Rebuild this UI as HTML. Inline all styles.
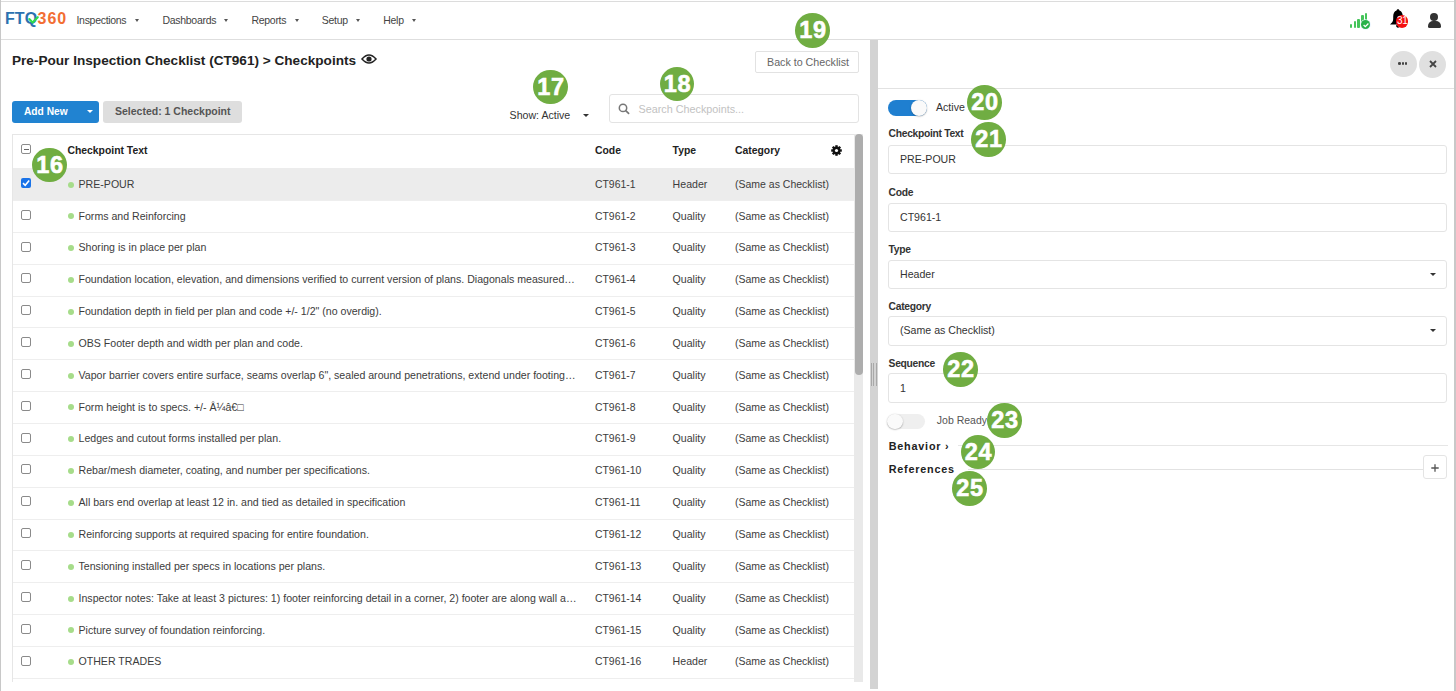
<!DOCTYPE html>
<html><head><meta charset="utf-8"><style>
html,body{margin:0;padding:0;background:#fff;width:1456px;height:691px;overflow:hidden;position:relative}
.t{position:absolute;white-space:nowrap;font-family:"Liberation Sans",sans-serif}
.b{position:absolute}
.caret{position:absolute;width:0;height:0;border-style:solid;border-color:transparent}
.num{position:absolute;border-radius:50%;background:#70ad42;color:#fff;font-family:"Liberation Sans",sans-serif;font-weight:bold;font-size:23.5px;text-align:center;letter-spacing:0.6px;text-indent:1px;-webkit-text-stroke:0.6px #fff}
</style></head><body>
<div class="b" style="left:0px;top:1px;width:1456px;height:1px;background:#dcdcdc"></div>
<div class="b" style="left:0px;top:0px;width:1px;height:691px;background:#c8c8c8"></div>
<div class="b" style="left:1454px;top:0px;width:2px;height:691px;background:#c8c8c8"></div>
<div class="b" style="left:1px;top:39px;width:1453px;height:1px;background:#dedede"></div>
<div class="t" style="left:5px;top:10.6px;font-size:16px;line-height:16px;font-weight:bold;color:#2c72b0;letter-spacing:0.1px">FTQ</div>
<div class="t" style="left:37.5px;top:10.6px;font-size:16px;line-height:16px;font-weight:bold;color:#f26e33;letter-spacing:1px">360</div>
<svg class="b" style="left:0;top:0" width="50" height="40" viewBox="0 0 50 40"><path d="M29.3 19 L32.6 22.4 L37.8 17.2" stroke="#2fdc4a" stroke-width="2.1" fill="none" stroke-linecap="round" stroke-linejoin="round"/></svg>
<div class="t" style="left:76.50px;top:15px;font-size:10.5px;line-height:10.5px;color:#444;font-weight:normal;letter-spacing:-0.3px">Inspections</div>
<div class="caret" style="left:135.3px;top:19px;border-width:3px 2.5px 0 2.5px;border-top-color:#555"></div>
<div class="t" style="left:162.50px;top:15px;font-size:10.5px;line-height:10.5px;color:#444;font-weight:normal;letter-spacing:-0.3px">Dashboards</div>
<div class="caret" style="left:224px;top:19px;border-width:3px 2.5px 0 2.5px;border-top-color:#555"></div>
<div class="t" style="left:251.50px;top:15px;font-size:10.5px;line-height:10.5px;color:#444;font-weight:normal;letter-spacing:-0.3px">Reports</div>
<div class="caret" style="left:294.8px;top:19px;border-width:3px 2.5px 0 2.5px;border-top-color:#555"></div>
<div class="t" style="left:321.80px;top:15px;font-size:10.5px;line-height:10.5px;color:#444;font-weight:normal;letter-spacing:-0.3px">Setup</div>
<div class="caret" style="left:356.2px;top:19px;border-width:3px 2.5px 0 2.5px;border-top-color:#555"></div>
<div class="t" style="left:383.30px;top:15px;font-size:10.5px;line-height:10.5px;color:#444;font-weight:normal;letter-spacing:-0.3px">Help</div>
<div class="caret" style="left:412px;top:19px;border-width:3px 2.5px 0 2.5px;border-top-color:#555"></div>
<div class="t" style="left:12.00px;top:54px;font-size:13.6px;line-height:13.6px;color:#222;font-weight:bold;">Pre-Pour Inspection Checklist (CT961) &gt; Checkpoints</div>
<svg class="b" style="left:361px;top:53px" width="16" height="12" viewBox="0 0 16 12"><path d="M1 6 Q8 -2 15 6 Q8 14 1 6 Z" stroke="#222" stroke-width="1.6" fill="none"/><circle cx="8" cy="6" r="2.6" fill="#222"/></svg>
<div class="b" style="left:754.5px;top:50.5px;width:104.5px;height:22px;border:1px solid #e2e2e2;border-radius:2px;box-sizing:border-box;background:#fff"></div>
<div class="t" style="left:767.00px;top:57px;font-size:10.7px;line-height:10.7px;color:#666;font-weight:normal;">Back to Checklist</div>
<div class="b" style="left:12px;top:100.5px;width:86.5px;height:22.5px;background:#2183d1;border-radius:3px"></div>
<div class="t" style="left:24.00px;top:107px;font-size:10.2px;line-height:10.2px;color:#fff;font-weight:bold;">Add New</div>
<div class="caret" style="left:87px;top:109.8px;border-width:3.5px 3px 0 3px;border-top-color:#fff"></div>
<div class="b" style="left:102.5px;top:100.5px;width:139.5px;height:22px;background:#dedede;border-radius:3px"></div>
<div class="t" style="left:115.00px;top:106px;font-size:10.5px;line-height:10.5px;color:#555;font-weight:bold;">Selected: 1 Checkpoint</div>
<div class="t" style="left:509.60px;top:110px;font-size:10.6px;line-height:10.6px;color:#333;font-weight:normal;">Show: Active</div>
<div class="caret" style="left:582.5px;top:113.5px;border-width:3.5px 3px 0 3px;border-top-color:#333"></div>
<div class="b" style="left:609px;top:94px;width:250px;height:28.5px;border:1px solid #e3e3e3;border-radius:3px;box-sizing:border-box;background:#fff"></div>
<svg class="b" style="left:618px;top:103px" width="13" height="12" viewBox="0 0 13 12"><circle cx="5" cy="4.9" r="3.7" stroke="#777" stroke-width="1.5" fill="none"/><path d="M7.7 7.6 L10.6 10.3" stroke="#777" stroke-width="1.7" stroke-linecap="round"/></svg>
<div class="t" style="left:638.50px;top:104px;font-size:10.8px;line-height:10.8px;color:#c2c2c2;font-weight:normal;">Search Checkpoints...</div>
<div class="b" style="left:12px;top:134px;width:843px;height:1px;background:#e6e6e6"></div>
<div class="b" style="left:12px;top:134px;width:1px;height:548px;background:#e6e6e6"></div>
<div class="b" style="left:21px;top:144px;width:10px;height:10px;border:1px solid #8c8c8c;border-radius:2px;box-sizing:border-box;background:#fff"></div>
<div class="b" style="left:23.5px;top:148.5px;width:5px;height:1.2px;background:#666"></div>
<div class="t" style="left:67.40px;top:146px;font-size:10.4px;line-height:10.4px;color:#222;font-weight:bold;">Checkpoint Text</div>
<div class="t" style="left:595.00px;top:146px;font-size:10.4px;line-height:10.4px;color:#222;font-weight:bold;">Code</div>
<div class="t" style="left:672.60px;top:146px;font-size:10.4px;line-height:10.4px;color:#222;font-weight:bold;">Type</div>
<div class="t" style="left:735.00px;top:146px;font-size:10.4px;line-height:10.4px;color:#222;font-weight:bold;">Category</div>
<svg class="b" style="left:831px;top:144.5px" width="11" height="11" viewBox="-5.5 -5.5 11 11"><g fill="#111"><circle r="3.9"/><rect x="-1.2" y="-5.3" width="2.4" height="2.6" transform="rotate(0)"/><rect x="-1.2" y="-5.3" width="2.4" height="2.6" transform="rotate(45)"/><rect x="-1.2" y="-5.3" width="2.4" height="2.6" transform="rotate(90)"/><rect x="-1.2" y="-5.3" width="2.4" height="2.6" transform="rotate(135)"/><rect x="-1.2" y="-5.3" width="2.4" height="2.6" transform="rotate(180)"/><rect x="-1.2" y="-5.3" width="2.4" height="2.6" transform="rotate(225)"/><rect x="-1.2" y="-5.3" width="2.4" height="2.6" transform="rotate(270)"/><rect x="-1.2" y="-5.3" width="2.4" height="2.6" transform="rotate(315)"/></g><circle r="1.6" fill="#fff"/></svg>
<div class="b" style="left:13px;top:168px;width:842px;height:32px;background:#ececec"></div>
<div class="b" style="left:13px;top:200px;width:842px;height:1px;background:#eeeeee"></div>
<div class="b" style="left:21px;top:177.80px;width:10px;height:10px;background:#1a73e8;border-radius:2px"></div>
<svg class="b" style="left:21px;top:177.80px" width="10" height="10" viewBox="0 0 10 10"><path d="M2 5.2 L4.2 7.3 L8.2 2.6" stroke="#fff" stroke-width="1.6" fill="none"/></svg>
<div class="b" style="left:67.7px;top:181.50px;width:6px;height:6px;border-radius:50%;background:#a6dc8a"></div>
<div class="t" style="left:78.50px;top:179px;font-size:10.6px;line-height:10.6px;color:#3c3c3c;font-weight:normal;">PRE-POUR</div>
<div class="t" style="left:595.00px;top:180px;font-size:10.4px;line-height:10.4px;color:#3c3c3c;font-weight:normal;">CT961-1</div>
<div class="t" style="left:672.60px;top:179px;font-size:10.6px;line-height:10.6px;color:#3c3c3c;font-weight:normal;">Header</div>
<div class="t" style="left:735.00px;top:179px;font-size:10.5px;line-height:10.5px;color:#3c3c3c;font-weight:normal;">(Same as Checklist)</div>
<div class="b" style="left:13px;top:232px;width:842px;height:1px;background:#eeeeee"></div>
<div class="b" style="left:21px;top:209.65px;width:10px;height:10px;border:1px solid #8a8a8a;border-radius:2px;box-sizing:border-box;background:#fff"></div>
<div class="b" style="left:67.7px;top:213.35px;width:6px;height:6px;border-radius:50%;background:#a6dc8a"></div>
<div class="t" style="left:78.50px;top:211px;font-size:10.6px;line-height:10.6px;color:#3c3c3c;font-weight:normal;">Forms and Reinforcing</div>
<div class="t" style="left:595.00px;top:212px;font-size:10.4px;line-height:10.4px;color:#3c3c3c;font-weight:normal;">CT961-2</div>
<div class="t" style="left:672.60px;top:211px;font-size:10.6px;line-height:10.6px;color:#3c3c3c;font-weight:normal;">Quality</div>
<div class="t" style="left:735.00px;top:211px;font-size:10.5px;line-height:10.5px;color:#3c3c3c;font-weight:normal;">(Same as Checklist)</div>
<div class="b" style="left:13px;top:264px;width:842px;height:1px;background:#eeeeee"></div>
<div class="b" style="left:21px;top:241.50px;width:10px;height:10px;border:1px solid #8a8a8a;border-radius:2px;box-sizing:border-box;background:#fff"></div>
<div class="b" style="left:67.7px;top:245.20px;width:6px;height:6px;border-radius:50%;background:#a6dc8a"></div>
<div class="t" style="left:78.50px;top:242px;font-size:10.6px;line-height:10.6px;color:#3c3c3c;font-weight:normal;">Shoring is in place per plan</div>
<div class="t" style="left:595.00px;top:243px;font-size:10.4px;line-height:10.4px;color:#3c3c3c;font-weight:normal;">CT961-3</div>
<div class="t" style="left:672.60px;top:242px;font-size:10.6px;line-height:10.6px;color:#3c3c3c;font-weight:normal;">Quality</div>
<div class="t" style="left:735.00px;top:242px;font-size:10.5px;line-height:10.5px;color:#3c3c3c;font-weight:normal;">(Same as Checklist)</div>
<div class="b" style="left:13px;top:296px;width:842px;height:1px;background:#eeeeee"></div>
<div class="b" style="left:21px;top:273.35px;width:10px;height:10px;border:1px solid #8a8a8a;border-radius:2px;box-sizing:border-box;background:#fff"></div>
<div class="b" style="left:67.7px;top:277.05px;width:6px;height:6px;border-radius:50%;background:#a6dc8a"></div>
<div class="t" style="left:78.50px;top:274px;font-size:10.6px;line-height:10.6px;color:#3c3c3c;font-weight:normal;">Foundation location, elevation, and dimensions verified to current version of plans. Diagonals measured&#8230;</div>
<div class="t" style="left:595.00px;top:275px;font-size:10.4px;line-height:10.4px;color:#3c3c3c;font-weight:normal;">CT961-4</div>
<div class="t" style="left:672.60px;top:274px;font-size:10.6px;line-height:10.6px;color:#3c3c3c;font-weight:normal;">Quality</div>
<div class="t" style="left:735.00px;top:274px;font-size:10.5px;line-height:10.5px;color:#3c3c3c;font-weight:normal;">(Same as Checklist)</div>
<div class="b" style="left:13px;top:327px;width:842px;height:1px;background:#eeeeee"></div>
<div class="b" style="left:21px;top:305.20px;width:10px;height:10px;border:1px solid #8a8a8a;border-radius:2px;box-sizing:border-box;background:#fff"></div>
<div class="b" style="left:67.7px;top:308.90px;width:6px;height:6px;border-radius:50%;background:#a6dc8a"></div>
<div class="t" style="left:78.50px;top:306px;font-size:10.6px;line-height:10.6px;color:#3c3c3c;font-weight:normal;">Foundation depth in field per plan and code +/- 1/2" (no overdig).</div>
<div class="t" style="left:595.00px;top:307px;font-size:10.4px;line-height:10.4px;color:#3c3c3c;font-weight:normal;">CT961-5</div>
<div class="t" style="left:672.60px;top:306px;font-size:10.6px;line-height:10.6px;color:#3c3c3c;font-weight:normal;">Quality</div>
<div class="t" style="left:735.00px;top:306px;font-size:10.5px;line-height:10.5px;color:#3c3c3c;font-weight:normal;">(Same as Checklist)</div>
<div class="b" style="left:13px;top:359px;width:842px;height:1px;background:#eeeeee"></div>
<div class="b" style="left:21px;top:337.05px;width:10px;height:10px;border:1px solid #8a8a8a;border-radius:2px;box-sizing:border-box;background:#fff"></div>
<div class="b" style="left:67.7px;top:340.75px;width:6px;height:6px;border-radius:50%;background:#a6dc8a"></div>
<div class="t" style="left:78.50px;top:338px;font-size:10.6px;line-height:10.6px;color:#3c3c3c;font-weight:normal;">OBS Footer depth and width per plan and code.</div>
<div class="t" style="left:595.00px;top:339px;font-size:10.4px;line-height:10.4px;color:#3c3c3c;font-weight:normal;">CT961-6</div>
<div class="t" style="left:672.60px;top:338px;font-size:10.6px;line-height:10.6px;color:#3c3c3c;font-weight:normal;">Quality</div>
<div class="t" style="left:735.00px;top:338px;font-size:10.5px;line-height:10.5px;color:#3c3c3c;font-weight:normal;">(Same as Checklist)</div>
<div class="b" style="left:13px;top:391px;width:842px;height:1px;background:#eeeeee"></div>
<div class="b" style="left:21px;top:368.90px;width:10px;height:10px;border:1px solid #8a8a8a;border-radius:2px;box-sizing:border-box;background:#fff"></div>
<div class="b" style="left:67.7px;top:372.60px;width:6px;height:6px;border-radius:50%;background:#a6dc8a"></div>
<div class="t" style="left:78.50px;top:370px;font-size:10.6px;line-height:10.6px;color:#3c3c3c;font-weight:normal;">Vapor barrier covers entire surface, seams overlap 6", sealed around penetrations, extend under footing&#8230;</div>
<div class="t" style="left:595.00px;top:371px;font-size:10.4px;line-height:10.4px;color:#3c3c3c;font-weight:normal;">CT961-7</div>
<div class="t" style="left:672.60px;top:370px;font-size:10.6px;line-height:10.6px;color:#3c3c3c;font-weight:normal;">Quality</div>
<div class="t" style="left:735.00px;top:370px;font-size:10.5px;line-height:10.5px;color:#3c3c3c;font-weight:normal;">(Same as Checklist)</div>
<div class="b" style="left:13px;top:423px;width:842px;height:1px;background:#eeeeee"></div>
<div class="b" style="left:21px;top:400.75px;width:10px;height:10px;border:1px solid #8a8a8a;border-radius:2px;box-sizing:border-box;background:#fff"></div>
<div class="b" style="left:67.7px;top:404.45px;width:6px;height:6px;border-radius:50%;background:#a6dc8a"></div>
<div class="t" style="left:78.50px;top:402px;font-size:10.6px;line-height:10.6px;color:#3c3c3c;font-weight:normal;">Form height is to specs. +/- Â¼â€&#x25A1;</div>
<div class="t" style="left:595.00px;top:403px;font-size:10.4px;line-height:10.4px;color:#3c3c3c;font-weight:normal;">CT961-8</div>
<div class="t" style="left:672.60px;top:402px;font-size:10.6px;line-height:10.6px;color:#3c3c3c;font-weight:normal;">Quality</div>
<div class="t" style="left:735.00px;top:402px;font-size:10.5px;line-height:10.5px;color:#3c3c3c;font-weight:normal;">(Same as Checklist)</div>
<div class="b" style="left:13px;top:455px;width:842px;height:1px;background:#eeeeee"></div>
<div class="b" style="left:21px;top:432.60px;width:10px;height:10px;border:1px solid #8a8a8a;border-radius:2px;box-sizing:border-box;background:#fff"></div>
<div class="b" style="left:67.7px;top:436.30px;width:6px;height:6px;border-radius:50%;background:#a6dc8a"></div>
<div class="t" style="left:78.50px;top:433px;font-size:10.6px;line-height:10.6px;color:#3c3c3c;font-weight:normal;">Ledges and cutout forms installed per plan.</div>
<div class="t" style="left:595.00px;top:434px;font-size:10.4px;line-height:10.4px;color:#3c3c3c;font-weight:normal;">CT961-9</div>
<div class="t" style="left:672.60px;top:433px;font-size:10.6px;line-height:10.6px;color:#3c3c3c;font-weight:normal;">Quality</div>
<div class="t" style="left:735.00px;top:433px;font-size:10.5px;line-height:10.5px;color:#3c3c3c;font-weight:normal;">(Same as Checklist)</div>
<div class="b" style="left:13px;top:487px;width:842px;height:1px;background:#eeeeee"></div>
<div class="b" style="left:21px;top:464.45px;width:10px;height:10px;border:1px solid #8a8a8a;border-radius:2px;box-sizing:border-box;background:#fff"></div>
<div class="b" style="left:67.7px;top:468.15px;width:6px;height:6px;border-radius:50%;background:#a6dc8a"></div>
<div class="t" style="left:78.50px;top:465px;font-size:10.6px;line-height:10.6px;color:#3c3c3c;font-weight:normal;">Rebar/mesh diameter, coating, and number per specifications.</div>
<div class="t" style="left:595.00px;top:466px;font-size:10.4px;line-height:10.4px;color:#3c3c3c;font-weight:normal;">CT961-10</div>
<div class="t" style="left:672.60px;top:465px;font-size:10.6px;line-height:10.6px;color:#3c3c3c;font-weight:normal;">Quality</div>
<div class="t" style="left:735.00px;top:465px;font-size:10.5px;line-height:10.5px;color:#3c3c3c;font-weight:normal;">(Same as Checklist)</div>
<div class="b" style="left:13px;top:519px;width:842px;height:1px;background:#eeeeee"></div>
<div class="b" style="left:21px;top:496.30px;width:10px;height:10px;border:1px solid #8a8a8a;border-radius:2px;box-sizing:border-box;background:#fff"></div>
<div class="b" style="left:67.7px;top:500.00px;width:6px;height:6px;border-radius:50%;background:#a6dc8a"></div>
<div class="t" style="left:78.50px;top:497px;font-size:10.6px;line-height:10.6px;color:#3c3c3c;font-weight:normal;">All bars end overlap at least 12 in. and tied as detailed in specification</div>
<div class="t" style="left:595.00px;top:498px;font-size:10.4px;line-height:10.4px;color:#3c3c3c;font-weight:normal;">CT961-11</div>
<div class="t" style="left:672.60px;top:497px;font-size:10.6px;line-height:10.6px;color:#3c3c3c;font-weight:normal;">Quality</div>
<div class="t" style="left:735.00px;top:497px;font-size:10.5px;line-height:10.5px;color:#3c3c3c;font-weight:normal;">(Same as Checklist)</div>
<div class="b" style="left:13px;top:550px;width:842px;height:1px;background:#eeeeee"></div>
<div class="b" style="left:21px;top:528.15px;width:10px;height:10px;border:1px solid #8a8a8a;border-radius:2px;box-sizing:border-box;background:#fff"></div>
<div class="b" style="left:67.7px;top:531.85px;width:6px;height:6px;border-radius:50%;background:#a6dc8a"></div>
<div class="t" style="left:78.50px;top:529px;font-size:10.6px;line-height:10.6px;color:#3c3c3c;font-weight:normal;">Reinforcing supports at required spacing for entire foundation.</div>
<div class="t" style="left:595.00px;top:530px;font-size:10.4px;line-height:10.4px;color:#3c3c3c;font-weight:normal;">CT961-12</div>
<div class="t" style="left:672.60px;top:529px;font-size:10.6px;line-height:10.6px;color:#3c3c3c;font-weight:normal;">Quality</div>
<div class="t" style="left:735.00px;top:529px;font-size:10.5px;line-height:10.5px;color:#3c3c3c;font-weight:normal;">(Same as Checklist)</div>
<div class="b" style="left:13px;top:582px;width:842px;height:1px;background:#eeeeee"></div>
<div class="b" style="left:21px;top:560.00px;width:10px;height:10px;border:1px solid #8a8a8a;border-radius:2px;box-sizing:border-box;background:#fff"></div>
<div class="b" style="left:67.7px;top:563.70px;width:6px;height:6px;border-radius:50%;background:#a6dc8a"></div>
<div class="t" style="left:78.50px;top:561px;font-size:10.6px;line-height:10.6px;color:#3c3c3c;font-weight:normal;">Tensioning installed per specs in locations per plans.</div>
<div class="t" style="left:595.00px;top:562px;font-size:10.4px;line-height:10.4px;color:#3c3c3c;font-weight:normal;">CT961-13</div>
<div class="t" style="left:672.60px;top:561px;font-size:10.6px;line-height:10.6px;color:#3c3c3c;font-weight:normal;">Quality</div>
<div class="t" style="left:735.00px;top:561px;font-size:10.5px;line-height:10.5px;color:#3c3c3c;font-weight:normal;">(Same as Checklist)</div>
<div class="b" style="left:13px;top:614px;width:842px;height:1px;background:#eeeeee"></div>
<div class="b" style="left:21px;top:591.85px;width:10px;height:10px;border:1px solid #8a8a8a;border-radius:2px;box-sizing:border-box;background:#fff"></div>
<div class="b" style="left:67.7px;top:595.55px;width:6px;height:6px;border-radius:50%;background:#a6dc8a"></div>
<div class="t" style="left:78.50px;top:593px;font-size:10.6px;line-height:10.6px;color:#3c3c3c;font-weight:normal;">Inspector notes: Take at least 3 pictures: 1) footer reinforcing detail in a corner, 2) footer are along wall a&#8230;</div>
<div class="t" style="left:595.00px;top:594px;font-size:10.4px;line-height:10.4px;color:#3c3c3c;font-weight:normal;">CT961-14</div>
<div class="t" style="left:672.60px;top:593px;font-size:10.6px;line-height:10.6px;color:#3c3c3c;font-weight:normal;">Quality</div>
<div class="t" style="left:735.00px;top:593px;font-size:10.5px;line-height:10.5px;color:#3c3c3c;font-weight:normal;">(Same as Checklist)</div>
<div class="b" style="left:13px;top:646px;width:842px;height:1px;background:#eeeeee"></div>
<div class="b" style="left:21px;top:623.70px;width:10px;height:10px;border:1px solid #8a8a8a;border-radius:2px;box-sizing:border-box;background:#fff"></div>
<div class="b" style="left:67.7px;top:627.40px;width:6px;height:6px;border-radius:50%;background:#a6dc8a"></div>
<div class="t" style="left:78.50px;top:625px;font-size:10.6px;line-height:10.6px;color:#3c3c3c;font-weight:normal;">Picture survey of foundation reinforcing.</div>
<div class="t" style="left:595.00px;top:626px;font-size:10.4px;line-height:10.4px;color:#3c3c3c;font-weight:normal;">CT961-15</div>
<div class="t" style="left:672.60px;top:625px;font-size:10.6px;line-height:10.6px;color:#3c3c3c;font-weight:normal;">Quality</div>
<div class="t" style="left:735.00px;top:625px;font-size:10.5px;line-height:10.5px;color:#3c3c3c;font-weight:normal;">(Same as Checklist)</div>
<div class="b" style="left:13px;top:678px;width:842px;height:1px;background:#eeeeee"></div>
<div class="b" style="left:21px;top:655.55px;width:10px;height:10px;border:1px solid #8a8a8a;border-radius:2px;box-sizing:border-box;background:#fff"></div>
<div class="b" style="left:67.7px;top:659.25px;width:6px;height:6px;border-radius:50%;background:#a6dc8a"></div>
<div class="t" style="left:78.50px;top:656px;font-size:10.6px;line-height:10.6px;color:#3c3c3c;font-weight:normal;">OTHER TRADES</div>
<div class="t" style="left:595.00px;top:657px;font-size:10.4px;line-height:10.4px;color:#3c3c3c;font-weight:normal;">CT961-16</div>
<div class="t" style="left:672.60px;top:656px;font-size:10.6px;line-height:10.6px;color:#3c3c3c;font-weight:normal;">Header</div>
<div class="t" style="left:735.00px;top:656px;font-size:10.5px;line-height:10.5px;color:#3c3c3c;font-weight:normal;">(Same as Checklist)</div>
<div class="b" style="left:854px;top:134px;width:8.5px;height:548px;background:#e9e9e9"></div>
<div class="b" style="left:855px;top:134px;width:7.5px;height:241px;background:#adadad;border-radius:4px"></div>
<div class="b" style="left:870px;top:40px;width:8px;height:649px;background:#d3d3d3"></div>
<div class="b" style="left:870.8px;top:363px;width:1px;height:22.5px;background:#a8a8a8"></div>
<div class="b" style="left:873.1px;top:363px;width:1px;height:22.5px;background:#a8a8a8"></div>
<div class="b" style="left:876.2px;top:363px;width:1px;height:22.5px;background:#a8a8a8"></div>
<div class="b" style="left:878px;top:88px;width:576px;height:1px;background:#e2e2e2"></div>
<div class="b" style="left:1390px;top:50.5px;width:26.5px;height:26.5px;border-radius:50%;background:#e0e0e0"></div>
<div class="b" style="left:1398.10px;top:62.3px;width:2.6px;height:2.6px;border-radius:50%;background:#444"></div>
<div class="b" style="left:1401.50px;top:62.3px;width:2.6px;height:2.6px;border-radius:50%;background:#444"></div>
<div class="b" style="left:1404.90px;top:62.3px;width:2.6px;height:2.6px;border-radius:50%;background:#444"></div>
<div class="b" style="left:1419px;top:50.5px;width:27px;height:27px;border-radius:50%;background:#e0e0e0"></div>
<svg class="b" style="left:1428.5px;top:59.5px" width="8" height="8" viewBox="0 0 8 8"><path d="M1 1 L7 7 M7 1 L1 7" stroke="#444" stroke-width="1.8"/></svg>
<div class="b" style="left:888px;top:99.5px;width:38.5px;height:16px;background:#1f7fd0;border-radius:8px"></div>
<div class="b" style="left:910.5px;top:99.5px;width:16px;height:16px;border-radius:50%;background:#fafafa;box-shadow:0 0.5px 1.5px rgba(0,0,0,.35)"></div>
<div class="t" style="left:936.00px;top:102px;font-size:10.6px;line-height:10.6px;color:#333;font-weight:normal;">Active</div>
<div class="t" style="left:888.60px;top:129px;font-size:10.3px;line-height:10.3px;color:#333;font-weight:bold;letter-spacing:-0.3px">Checkpoint Text</div>
<div class="b" style="left:888px;top:144.7px;width:559px;height:29.5px;border:1px solid #e4e4e4;border-radius:3px;box-sizing:border-box;background:#fff"></div>
<div class="t" style="left:900.00px;top:154px;font-size:10.6px;line-height:10.6px;color:#333;font-weight:normal;">PRE-POUR</div>
<div class="t" style="left:888.60px;top:188px;font-size:10.3px;line-height:10.3px;color:#333;font-weight:bold;letter-spacing:-0.3px">Code</div>
<div class="b" style="left:888px;top:202.6px;width:559px;height:29.5px;border:1px solid #e4e4e4;border-radius:3px;box-sizing:border-box;background:#fff"></div>
<div class="t" style="left:900.00px;top:212px;font-size:10.6px;line-height:10.6px;color:#333;font-weight:normal;">CT961-1</div>
<div class="t" style="left:888.60px;top:245px;font-size:10.3px;line-height:10.3px;color:#333;font-weight:bold;letter-spacing:-0.3px">Type</div>
<div class="b" style="left:888px;top:259.5px;width:559px;height:29.5px;border:1px solid #e4e4e4;border-radius:3px;box-sizing:border-box;background:#fff"></div>
<div class="t" style="left:900.00px;top:269px;font-size:10.6px;line-height:10.6px;color:#333;font-weight:normal;">Header</div>
<div class="caret" style="left:1430px;top:272.50px;border-width:3.5px 3px 0 3px;border-top-color:#333"></div>
<div class="t" style="left:888.60px;top:302px;font-size:10.3px;line-height:10.3px;color:#333;font-weight:bold;letter-spacing:-0.3px">Category</div>
<div class="b" style="left:888px;top:316.3px;width:559px;height:29.5px;border:1px solid #e4e4e4;border-radius:3px;box-sizing:border-box;background:#fff"></div>
<div class="t" style="left:900.00px;top:325px;font-size:10.6px;line-height:10.6px;color:#333;font-weight:normal;">(Same as Checklist)</div>
<div class="caret" style="left:1430px;top:329.30px;border-width:3.5px 3px 0 3px;border-top-color:#333"></div>
<div class="t" style="left:888.60px;top:359px;font-size:10.3px;line-height:10.3px;color:#333;font-weight:bold;letter-spacing:-0.3px">Sequence</div>
<div class="b" style="left:888px;top:373.4px;width:559px;height:29.5px;border:1px solid #e4e4e4;border-radius:3px;box-sizing:border-box;background:#fff"></div>
<div class="t" style="left:900.00px;top:383px;font-size:10.6px;line-height:10.6px;color:#333;font-weight:normal;">1</div>
<div class="b" style="left:887px;top:413.5px;width:38px;height:15.5px;background:#efefef;border-radius:8px"></div>
<div class="b" style="left:887px;top:413.5px;width:15.5px;height:15.5px;border-radius:50%;background:#fafafa;box-shadow:0 0.5px 1.5px rgba(0,0,0,.35)"></div>
<div class="t" style="left:936.80px;top:415px;font-size:10.5px;line-height:10.5px;color:#555;font-weight:normal;">Job Ready</div>
<div class="t" style="left:888.70px;top:441px;font-size:10.8px;line-height:10.8px;color:#222;font-weight:bold;letter-spacing:0.8px">Behavior &#8250;</div>
<div class="b" style="left:958px;top:445px;width:490px;height:1px;background:#e6e6e6"></div>
<div class="t" style="left:888.70px;top:464px;font-size:10.8px;line-height:10.8px;color:#222;font-weight:bold;letter-spacing:0.8px">References</div>
<div class="b" style="left:968px;top:469px;width:455px;height:1px;background:#e2e2e2"></div>
<div class="b" style="left:1423px;top:455px;width:24px;height:23.5px;border:1px solid #e4e4e4;border-radius:3px;box-sizing:border-box;background:#fff"></div>
<svg class="b" style="left:1431px;top:463.5px" width="8" height="8" viewBox="0 0 8 8"><path d="M4 0.3 V7.7 M0.3 4 H7.7" stroke="#555" stroke-width="1.3"/></svg>
<div class="b" style="left:1349.6px;top:24.1px;width:2.4px;height:3.599999999999998px;background:#45c45a;border-radius:1px"></div>
<div class="b" style="left:1353.5px;top:21.3px;width:2.4px;height:6.399999999999999px;background:#45c45a;border-radius:1px"></div>
<div class="b" style="left:1357.3px;top:18.5px;width:2.4px;height:9.2px;background:#45c45a;border-radius:1px"></div>
<div class="b" style="left:1361.2px;top:15.4px;width:2.4px;height:12.299999999999999px;background:#45c45a;border-radius:1px"></div>
<div class="b" style="left:1365.1px;top:12.6px;width:2.4px;height:15.1px;background:#45c45a;border-radius:1px"></div>
<div class="b" style="left:1360.9px;top:19.7px;width:9.5px;height:9.5px;border-radius:50%;background:#27b24a;box-shadow:0 0 0 0.8px #e8f4ff"></div>
<svg class="b" style="left:1360.9px;top:19.7px" width="10" height="10" viewBox="0 0 10 10"><path d="M2.6 5 L4.3 6.6 L7.4 3.5" stroke="#fff" stroke-width="1.3" fill="none"/></svg>
<svg class="b" style="left:1388.5px;top:7.5px" width="18" height="21" viewBox="0 0 18 21"><path d="M9 1.2 C9.9 1.2 10.4 1.8 10.4 2.5 C12.8 3.3 13.8 5.6 13.8 8.5 L13.8 11 C13.8 13.5 15.3 15 17 16.5 L1 16.5 C2.7 15 4.2 13.5 4.2 11 L4.2 8.5 C4.2 5.6 5.2 3.3 7.6 2.5 C7.6 1.8 8.1 1.2 9 1.2 Z M7 17.3 L11 17.3 C11 18.8 10.1 19.8 9 19.8 C7.9 19.8 7 18.8 7 17.3 Z" fill="#000"/></svg>
<div class="b" style="left:1396px;top:15px;width:12.3px;height:12.5px;border-radius:50%;background:#f41010"></div>
<div class="t" style="left:1396px;top:15px;width:12.3px;height:12.5px;line-height:12.5px;text-align:center;font-size:10px;color:#fff;letter-spacing:-0.5px">31</div>
<div class="b" style="left:1430px;top:12.6px;width:8px;height:8px;border-radius:50%;background:#333"></div>
<div class="b" style="left:1427.6px;top:21.3px;width:13.2px;height:6.4px;border-radius:5px 5px 1.5px 1.5px;background:#333"></div>
<div class="num" style="left:32.25px;top:147.55px;width:34.5px;height:34.5px;line-height:34.5px;">16</div>
<div class="num" style="left:533.25px;top:69.75px;width:34.5px;height:34.5px;line-height:34.5px;">17</div>
<div class="num" style="left:659.75px;top:66.75px;width:34.5px;height:34.5px;line-height:34.5px;">18</div>
<div class="num" style="left:795.25px;top:13.15px;width:34.5px;height:34.5px;line-height:34.5px;">19</div>
<div class="num" style="left:967.15px;top:85.25px;width:34.5px;height:34.5px;line-height:34.5px;">20</div>
<div class="num" style="left:971.25px;top:122.25px;width:34.5px;height:34.5px;line-height:34.5px;">21</div>
<div class="num" style="left:943.25px;top:352.25px;width:34.5px;height:34.5px;line-height:34.5px;">22</div>
<div class="num" style="left:987.25px;top:403.25px;width:34.5px;height:34.5px;line-height:34.5px;">23</div>
<div class="num" style="left:960.75px;top:434.75px;width:34.5px;height:34.5px;line-height:34.5px;">24</div>
<div class="num" style="left:952.15px;top:471.25px;width:34.5px;height:34.5px;line-height:34.5px;">25</div>
</body></html>
